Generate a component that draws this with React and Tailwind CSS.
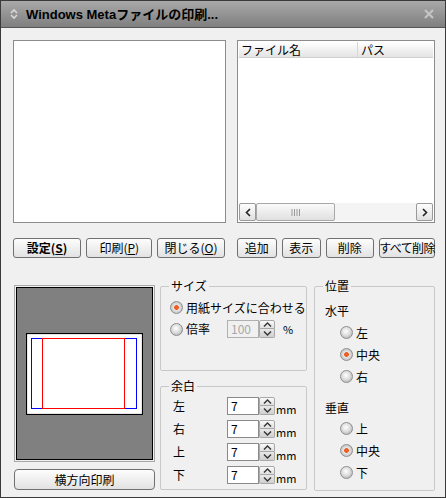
import React from 'react'

const font = { fontFamily: '"Noto Sans CJK JP", "Liberation Sans", sans-serif' }

function Btn({ children, className = '' }) {
    return (
        <div className={`h-[20px] flex items-center justify-center whitespace-nowrap rounded-[3px] border border-[#707070] bg-gradient-to-b from-[#fdfdfd] to-[#e2e2e2] text-[12px] text-black leading-none ${className}`}>
            {children}
        </div>
    )
}

function Radio({ checked, label, className = '' }) {
    return (
        <div className={`flex items-center gap-[3px] text-[12px] leading-none ${className}`}>
            <span
                className={`w-[13px] h-[13px] rounded-full border border-[#8e8e8e] ${
                    checked
                        ? 'bg-[radial-gradient(circle_at_50%_50%,#f36a2a_0,#e8561c_26%,#e9e9e9_34%,#bdbdbd_80%,#9a9a9a)]'
                        : 'bg-[radial-gradient(circle_at_45%_40%,#ffffff_0,#dedede_45%,#b4b4b4_85%,#9a9a9a)]'
                }`}
            />
            <span>{label}</span>
        </div>
    )
}

function Spinner() {
    return (
        <div className="flex flex-col w-[16px] h-[18px]">
            <div className="h-[9px] border border-[#a8a8a8] rounded-t-[2px] bg-gradient-to-b from-[#fafafa] to-[#e0e0e0] flex items-center justify-center">
                <svg width="9" height="5" viewBox="0 0 9 5"><path d="M1 4.5 L4.5 1 L8 4.5" fill="none" stroke="#333" strokeWidth="1.4" /></svg>
            </div>
            <div className="h-[9px] border border-t-0 border-[#a8a8a8] rounded-b-[2px] bg-gradient-to-b from-[#e8e8e8] to-[#d0d0d0] flex items-center justify-center">
                <svg width="9" height="5" viewBox="0 0 9 5"><path d="M1 0.5 L4.5 4 L8 0.5" fill="none" stroke="#333" strokeWidth="1.4" /></svg>
            </div>
        </div>
    )
}

function MarginRow({ label }) {
    return (
        <div className="flex items-center h-[18px]">
            <span className="w-[66px] pl-[12px] text-[12px]">{label}</span>
            <div className="w-[32px] h-[18px] border border-[#8a8a8a] bg-white text-[12px] leading-[16px] pl-[3px]">7</div>
            <Spinner />
            <span className="text-[11px] self-end leading-[12px] ml-[1px]">mm</span>
        </div>
    )
}

export default function App() {
    return (
        <div style={font} className="w-[446px] h-[498px] border border-[#3a3a3a] bg-[#f0f0f0] flex flex-col text-black overflow-hidden">
            {/* Title bar */}
            <div className="h-[27px] shrink-0 flex items-center bg-gradient-to-b from-[#a9a9a9] to-[#7f7f7f] border-b border-[#555]">
                <svg className="ml-[8px]" width="10" height="12" viewBox="0 0 10 12">
                    <path d="M2 5 L5 2 L8 5 M2 7 L5 10 L8 7" fill="none" stroke="#d8d8d8" strokeWidth="1.6" />
                </svg>
                <span className="ml-[7px] text-[13px] font-bold leading-none" style={{ fontFamily: '"Liberation Sans", "Noto Sans CJK JP", sans-serif' }}>Windows Metaファイルの印刷...</span>
                <svg className="ml-auto mr-[10px]" width="12" height="12" viewBox="0 0 12 12">
                    <path d="M2 2 L10 10 M10 2 L2 10" stroke="#c4c4c4" strokeWidth="2.2" />
                </svg>
            </div>

            <div className="flex-1 pl-[12px] pr-[10px] pt-[12px] flex flex-col">
                {/* Top: preview + file list */}
                <div className="flex gap-[11px]">
                    <div className="w-[213px] h-[183px] border border-[#8c8c8c] bg-white" />
                    <div className="w-[198px] h-[183px] border border-[#8c8c8c] bg-white flex flex-col p-[1px]">
                        <div className="h-[16px] flex text-[12px] leading-[16px] bg-gradient-to-b from-[#ffffff] to-[#e4e4e4] border-b border-[#d0d0d0]">
                            <span className="w-[119px] pl-[2px] border-r border-[#d6d6d6]">ファイル名</span>
                            <span className="pl-[3px]">パス</span>
                        </div>
                        <div className="flex-1" />
                        <div className="h-[18px] flex items-stretch bg-[#f4f4f4]">
                            <div className="w-[17px] border border-[#9a9a9a] rounded-[2px] bg-gradient-to-b from-[#fdfdfd] to-[#e0e0e0] flex items-center justify-center">
                                <svg width="6" height="9" viewBox="0 0 6 9"><path d="M5 1 L1.5 4.5 L5 8" fill="none" stroke="#222" strokeWidth="1.6" /></svg>
                            </div>
                            <div className="w-[79px] border border-[#a8a8a8] rounded-[2px] bg-gradient-to-b from-[#fafafa] to-[#e0e0e0] flex items-center justify-center">
                                <svg width="10" height="7" viewBox="0 0 10 7"><path d="M1 0 V7 M3.5 0 V7 M6 0 V7 M8.5 0 V7" stroke="#9a9a9a" strokeWidth="1" /></svg>
                            </div>
                            <div className="flex-1" />
                            <div className="w-[17px] border border-[#9a9a9a] rounded-[2px] bg-gradient-to-b from-[#fdfdfd] to-[#e0e0e0] flex items-center justify-center">
                                <svg width="6" height="9" viewBox="0 0 6 9"><path d="M1 1 L4.5 4.5 L1 8" fill="none" stroke="#222" strokeWidth="1.6" /></svg>
                            </div>
                        </div>
                    </div>
                </div>

                {/* Buttons */}
                <div className="flex mt-[15px]">
                    <Btn className="w-[69px] font-bold">設定(<span className="underline">S</span>)</Btn>
                    <Btn className="w-[67px] ml-[5px]">印刷(<span className="underline">P</span>)</Btn>
                    <Btn className="w-[68px] ml-[5px]">閉じる(<span className="underline">O</span>)</Btn>
                    <Btn className="w-[41px] ml-[12px]">追加</Btn>
                    <Btn className="w-[39px] ml-[5px]">表示</Btn>
                    <Btn className="w-[49px] ml-[5px]">削除</Btn>
                    <Btn className="w-[56px] ml-[5px] text-[11px] tracking-[-0.6px]">すべて削除</Btn>
                </div>

                {/* Lower section */}
                <div className="flex mt-[27px]">
                    <div className="w-[141px] ml-[1px] flex flex-col">
                        <div className="h-[177px] border border-[#a8a8a8] p-[1px]">
                            <div className="w-full h-full border border-black bg-[#808080] flex items-center justify-center">
                                <svg width="117" height="82" viewBox="0 0 117 82">
                                    <rect x="0.5" y="0.5" width="116" height="81" fill="#fff" stroke="#000" strokeWidth="1.2" />
                                    <rect x="5.5" y="5.5" width="105" height="70" fill="none" stroke="#0000ff" strokeWidth="1" />
                                    <rect x="16.5" y="5.5" width="82" height="70" fill="none" stroke="#ff0000" strokeWidth="1" />
                                </svg>
                            </div>
                        </div>
                        <Btn className="mt-[7px] h-[21px] rounded-[4px]">横方向印刷</Btn>
                    </div>

                    <div className="flex flex-col ml-[5px] w-[147px] pt-[1px]">
                        <div className="relative h-[85px] border border-[#c8c8c8] rounded-[2px]">
                            <span className="absolute -top-[9px] left-[8px] px-[2px] bg-[#f0f0f0] text-[12px] leading-[16px]">サイズ</span>
                            <Radio checked label="用紙サイズに合わせる" className="ml-[9px] mt-[14px]" />
                            <div className="flex items-center mt-[6px]">
                                <Radio label="倍率" className="ml-[9px] w-[57px]" />
                                <div className="w-[32px] h-[18px] border border-[#b0b0b0] bg-[#f0f0f0] text-[12px] leading-[16px] pl-[3px] text-[#a8a8a8]">100</div>
                                <Spinner />
                                <span className="text-[11px] ml-[8px]">%</span>
                            </div>
                        </div>
                        <div className="relative h-[104px] mt-[15px] border border-[#c8c8c8] rounded-[2px] flex flex-col gap-[5px] pt-[10px]">
                            <span className="absolute -top-[9px] left-[8px] px-[2px] bg-[#f0f0f0] text-[12px] leading-[16px]">余白</span>
                            <MarginRow label="左" />
                            <MarginRow label="右" />
                            <MarginRow label="上" />
                            <MarginRow label="下" />
                        </div>
                    </div>

                    <div className="relative ml-[7px] w-[121px] h-[205px] mt-[1px] border border-[#c8c8c8] rounded-[2px] text-[12px]">
                        <span className="absolute -top-[9px] left-[8px] px-[2px] bg-[#f0f0f0] leading-[16px]">位置</span>
                        <div className="ml-[10px] mt-[18px] leading-none">水平</div>
                        <div className="flex flex-col gap-[9px] mt-[9px] ml-[25px]">
                            <Radio label="左" />
                            <Radio checked label="中央" />
                            <Radio label="右" />
                        </div>
                        <div className="ml-[10px] mt-[19px] leading-none">垂直</div>
                        <div className="flex flex-col gap-[9px] mt-[8px] ml-[25px]">
                            <Radio label="上" />
                            <Radio checked label="中央" />
                            <Radio label="下" />
                        </div>
                    </div>
                </div>
            </div>
        </div>
    )
}
